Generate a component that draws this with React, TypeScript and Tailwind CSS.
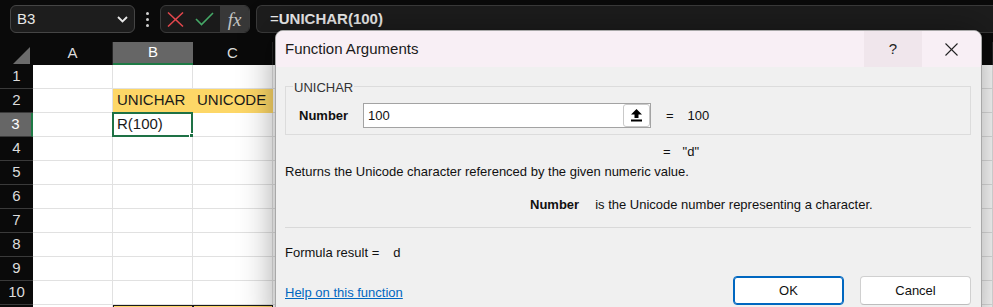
import React from 'react';

const COLS = ['A', 'B', 'C', 'D', 'E', 'F', 'G', 'H', 'I', 'J', 'K', 'L', 'M'];
const ROWS = [1, 2, 3, 4, 5, 6, 7, 8, 9, 10, 11];

function Cell({ col, row }: { col: string; row: number }) {
    const yellowHead = row === 2 && (col === 'B' || col === 'C');
    const yellowFoot = row === 11 && (col === 'B' || col === 'C');
    const text = yellowHead ? (col === 'B' ? 'UNICHAR' : 'UNICODE') : row === 3 && col === 'B' ? 'R(100)' : '';

    return (
        <div
            className={`relative w-[80px] h-[24px] shrink-0 border-r border-b flex items-center pl-[4px] whitespace-nowrap text-[15px] text-[#1a1a1a] ${
                yellowHead
                    ? 'bg-[#fdd767] border-[#fdd767]'
                    : yellowFoot
                    ? 'bg-[#fdd767] border-[#1a1a1a] border-t border-l'
                    : 'bg-white border-[#e1e1e1]'
            }`}
        >
            {text}
            {row === 3 && col === 'B' && (
                <div className="absolute -top-[1px] -left-[1px] w-[81px] h-[25px] border-2 border-[#1e7145]">
                    <div className="absolute -bottom-[3px] -right-[3px] w-[5px] h-[5px] bg-[#1e7145] border border-white" />
                </div>
            )}
        </div>
    );
}

function Sheet() {
    return (
        <div className="flex flex-col">
            {/* column headers */}
            <div className="flex h-[23px]">
                <div className="relative w-[33px] h-[23px] shrink-0 bg-[#0a0a0a]">
                    <svg className="absolute left-[13px] top-[5px]" width="17" height="17" viewBox="0 0 17 17">
                        <polygon points="17,0 17,17 0,17" fill="#6b6b6b" />
                    </svg>
                </div>
                {COLS.map((c) => (
                    <div
                        key={c}
                        className={`w-[80px] h-[23px] shrink-0 flex items-center justify-center text-[15px] ${
                            c === 'B'
                                ? 'bg-[#666666] text-white border-b-2 border-[#1e7a45]'
                                : 'bg-[#0a0a0a] text-[#dcdcdc] border-r border-[#262626]'
                        }`}
                    >
                        {c}
                    </div>
                ))}
            </div>
            {ROWS.map((r) => (
                <div key={r} className="flex">
                    <div
                        className={`w-[33px] h-[24px] shrink-0 flex items-center justify-center text-[15px] border-b border-[#3a3a3a] ${
                            r === 3 ? 'bg-[#666666] text-white border-r-2 border-r-[#1e7a45]' : 'bg-[#0a0a0a] text-[#dcdcdc]'
                        }`}
                    >
                        {r}
                    </div>
                    {COLS.map((c) => (
                        <Cell key={c} col={c} row={r} />
                    ))}
                </div>
            ))}
        </div>
    );
}

function Toolbar() {
    return (
        <div className="flex items-center h-[42px] pl-[10px] pb-[4px] bg-[#0a0a0a]">
            <div className="w-[125px] h-[28px] shrink-0 rounded-[6px] border border-[#454545] bg-[#1d1d1d] flex items-center justify-between pl-[6px] pr-[6px]">
                <span className="text-[15px] text-[#e8e8e8]">B3</span>
                <svg width="11" height="7" viewBox="0 0 11 7">
                    <polyline points="1,1 5.5,5.5 10,1" fill="none" stroke="#e8e8e8" strokeWidth="1.8" />
                </svg>
            </div>
            <div className="ml-[11px] flex flex-col gap-[3px]">
                <div className="w-[3px] h-[3px] rounded-full bg-[#cfcfcf]" />
                <div className="w-[3px] h-[3px] rounded-full bg-[#cfcfcf]" />
                <div className="w-[3px] h-[3px] rounded-full bg-[#cfcfcf]" />
            </div>
            <div className="ml-[11px] w-[90px] h-[28px] shrink-0 rounded-[6px] border border-[#3a3a3a] bg-[#1a1a1a] flex items-center overflow-hidden">
                <svg className="ml-[6px]" width="17" height="15" viewBox="0 0 17 15">
                    <line x1="1" y1="0.5" x2="16" y2="14.5" stroke="#e3474d" strokeWidth="1.5" />
                    <line x1="16" y1="0.5" x2="1" y2="14.5" stroke="#e3474d" strokeWidth="1.5" />
                </svg>
                <svg className="ml-[11px]" width="19" height="14" viewBox="0 0 19 14">
                    <polyline points="1,7 6.5,12.5 18,1" fill="none" stroke="#45a867" strokeWidth="1.6" />
                </svg>
                <div className="ml-[6px] h-full flex-1 bg-[#383838] flex items-center justify-center">
                    <span className="text-[19px] italic text-[#c4c4c4] font-['Liberation_Serif',serif] leading-none">fx</span>
                </div>
            </div>
            <div className="ml-[6px] flex-1 h-[28px] rounded-l-[6px] border border-r-0 border-[#3a3a3a] bg-[#1d1d1d] flex items-center pl-[13px] text-[15px] text-[#f0f0f0]">
                =<span className="font-bold">UNICHAR(100)</span>
            </div>
        </div>
    );
}

function UploadIcon() {
    return (
        <svg width="11" height="13" viewBox="0 0 11 13">
            <polygon points="5.5,0 11,5.5 7.5,5.5 7.5,9 3.5,9 3.5,5.5 0,5.5" fill="#000" />
            <rect x="0" y="10.5" width="11" height="2" fill="#000" />
        </svg>
    );
}

function Dialog() {
    return (
        <div className="absolute left-[275px] top-[30px] w-[707px] h-[300px] rounded-t-[8px] border border-[#a8a8a8] bg-[#f0f0f0] shadow-[0_0_36px_rgba(0,0,0,0.38)] overflow-hidden text-[13px] text-[#111]">
            <div className="h-[36px] flex items-center justify-between bg-[#f8eff5]">
                <span className="pl-[9px] text-[15px] text-[#1a1a1a]">Function Arguments</span>
                <div className="flex h-full">
                    <div className="w-[58px] h-full bg-[#f0e6ec] flex items-center justify-center text-[15px] text-[#222]">?</div>
                    <div className="w-[59px] h-full flex items-center justify-center">
                        <svg width="13" height="13" viewBox="0 0 13 13">
                            <line x1="0.5" y1="0.5" x2="12.5" y2="12.5" stroke="#222" strokeWidth="1.1" />
                            <line x1="12.5" y1="0.5" x2="0.5" y2="12.5" stroke="#222" strokeWidth="1.1" />
                        </svg>
                    </div>
                </div>
            </div>

            <div className="pl-[9px] pr-[10px]">
                <div className="relative mt-[19px] h-[49px] border border-[#dcdcdc] pt-[16px] pl-[13px]">
                    <span className="absolute -top-[9px] left-[7px] px-[1px] bg-[#f0f0f0] text-[#333]">UNICHAR</span>
                    <div className="flex items-center h-[25px]">
                        <span className="w-[64px] font-bold">Number</span>
                        <div className="w-[288px] h-[25px] border border-[#a3a3a3] bg-white flex items-center justify-between pl-[4px]">
                            <span>100</span>
                            <div className="w-[27px] h-[23px] rounded-[3px] border border-[#c9c9c9] bg-white flex items-center justify-center">
                                <UploadIcon />
                            </div>
                        </div>
                        <span className="ml-[15px]">=</span>
                        <span className="ml-[14px]">100</span>
                    </div>
                </div>

                <div className="mt-[7px] h-[20px] flex items-center pl-[378px]">
                    <span>=</span>
                    <span className="ml-[12px]">"d"</span>
                </div>
                <div className="h-[20px] flex items-center">Returns the Unicode character referenced by the given numeric value.</div>
                <div className="mt-[13px] h-[20px] flex items-center pl-[245px]">
                    <span className="font-bold">Number</span>
                    <span className="ml-[16px]">is the Unicode number representing a character.</span>
                </div>
                <div className="mt-[12px] h-[1px] bg-[#d9d9d9]" />
                <div className="mt-[15px] h-[20px] flex items-center">
                    <span>Formula result =</span>
                    <span className="ml-[14px]">d</span>
                </div>
                <div className="mt-[13px] flex items-center justify-between">
                    <span className="pt-[4px] text-[#0067c0] underline">Help on this function</span>
                    <div className="flex gap-[16px]">
                        <button className="w-[111px] h-[29px] rounded-[4px] border border-[#0067c0] bg-white shadow-[inset_0_0_0_1px_#0067c0]">OK</button>
                        <button className="w-[111px] h-[29px] rounded-[4px] border border-[#d0d0d0] border-b-[#bdbdbd] bg-white">Cancel</button>
                    </div>
                </div>
            </div>
        </div>
    );
}

export default function App() {
    return (
        <div className="relative w-[993px] h-[307px] overflow-hidden bg-[#0a0a0a] font-['Liberation_Sans',Arial,sans-serif]">
            <Toolbar />
            <Sheet />
            <Dialog />
        </div>
    );
}
